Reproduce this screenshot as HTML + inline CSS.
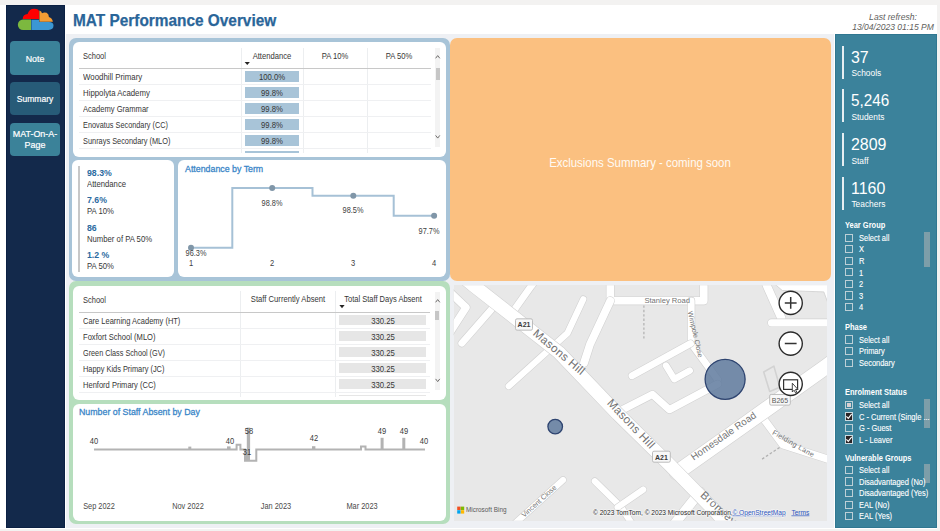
<!DOCTYPE html>
<html><head><meta charset="utf-8"><style>
html,body{margin:0;padding:0;width:940px;height:531px;overflow:hidden;background:#f3f2f1;}
body{position:relative;font-family:"Liberation Sans", sans-serif;}
.r{position:absolute;box-sizing:content-box;}
.t{position:absolute;line-height:1;white-space:nowrap;}
svg{position:absolute;left:0;top:0;}
</style></head><body>
<div class="r" style="left:0px;top:0px;width:940px;height:531px;background:#f3f2f1;border-radius:0px;"></div>
<div class="r" style="left:0px;top:4.5px;width:937px;height:524px;background:#ffffff;border-radius:0px;"></div>
<div class="r" style="left:6px;top:5px;width:58.6px;height:523px;background:#13294b;border-radius:0px;box-shadow:inset 0 0 0 1px #0b2043;"></div>
<div class="r" style="left:66px;top:34px;width:767.8px;height:494px;background:#eef0f4;border-radius:0px;"></div>
<div class="r" style="left:835.3px;top:34px;width:101.7px;height:494px;background:#3b829b;border-radius:0px;box-shadow:inset 0 0 0 1px #307791;"></div>
<div class="t" style="left:73.40px;top:12.10px;font-size:16.3px;color:#2a6599;font-weight:bold;font-style:normal;transform:scaleX(0.945);transform-origin:left;-webkit-text-stroke:0.25px #2a6599;">MAT Performance Overview</div>
<div class="t" style="left:593.00px;width:600px;text-align:center;top:12.62px;font-size:8.6px;color:#605e5c;font-weight:normal;font-style:italic;">Last refresh:</div>
<div class="t" style="left:593.00px;width:600px;text-align:center;top:23.16px;font-size:8.55px;color:#605e5c;font-weight:normal;font-style:italic;">13/04/2023 01:15 PM</div>
<div class="r" style="left:10px;top:41px;width:50.2px;height:33.5px;background:#3b8299;border-radius:4px;"></div>
<div class="t" style="left:-264.90px;width:600px;text-align:center;top:55.03px;font-size:9.3px;color:#ffffff;font-weight:normal;font-style:normal;transform:scaleX(0.95);transform-origin:center;-webkit-text-stroke:0.2px #ffffff;">Note</div>
<div class="r" style="left:10px;top:82px;width:50.2px;height:33px;background:#275b78;border-radius:4px;"></div>
<div class="t" style="left:-264.90px;width:600px;text-align:center;top:95.13px;font-size:9.3px;color:#ffffff;font-weight:normal;font-style:normal;transform:scaleX(0.92);transform-origin:center;-webkit-text-stroke:0.2px #ffffff;">Summary</div>
<div class="r" style="left:10px;top:122.5px;width:50.2px;height:33px;background:#3b8299;border-radius:4px;"></div>
<div class="t" style="left:-264.90px;width:600px;text-align:center;top:129.83px;font-size:9.3px;color:#ffffff;font-weight:normal;font-style:normal;transform:scaleX(0.96);transform-origin:center;-webkit-text-stroke:0.2px #ffffff;">MAT-On-A-</div>
<div class="t" style="left:-264.90px;width:600px;text-align:center;top:141.13px;font-size:9.3px;color:#ffffff;font-weight:normal;font-style:normal;transform:scaleX(0.96);transform-origin:center;-webkit-text-stroke:0.2px #ffffff;">Page</div>
<div class="r" style="left:68.5px;top:38px;width:381px;height:243px;background:#a8c4d8;border-radius:7px;"></div>
<div class="r" style="left:72.5px;top:42px;width:373.5px;height:115px;background:#ffffff;border-radius:6px;"></div>
<div class="r" style="left:72.3px;top:160px;width:102px;height:117.2px;background:#ffffff;border-radius:6px;"></div>
<div class="r" style="left:178px;top:160px;width:268px;height:117.2px;background:#ffffff;border-radius:6px;"></div>
<div class="t" style="left:82.70px;top:51.92px;font-size:8.6px;color:#363636;font-weight:normal;font-style:normal;transform:scaleX(0.87);transform-origin:left;">School</div>
<div class="t" style="left:-28.20px;width:600px;text-align:center;top:51.92px;font-size:8.6px;color:#363636;font-weight:normal;font-style:normal;transform:scaleX(0.89);transform-origin:center;">Attendance</div>
<div class="t" style="left:35.20px;width:600px;text-align:center;top:51.92px;font-size:8.6px;color:#363636;font-weight:normal;font-style:normal;transform:scaleX(0.89);transform-origin:center;">PA 10%</div>
<div class="t" style="left:98.80px;width:600px;text-align:center;top:51.92px;font-size:8.6px;color:#363636;font-weight:normal;font-style:normal;transform:scaleX(0.89);transform-origin:center;">PA 50%</div>
<div class="r" style="left:240.6px;top:48px;width:0.8px;height:105px;background:#eceef0;border-radius:0px;"></div>
<div class="r" style="left:303.4px;top:48px;width:0.8px;height:105px;background:#eceef0;border-radius:0px;"></div>
<div class="r" style="left:366.7px;top:48px;width:0.8px;height:105px;background:#eceef0;border-radius:0px;"></div>
<div class="r" style="left:79px;top:68.2px;width:351.5px;height:1.2px;background:#c8c8c8;border-radius:0px;"></div>
<div class="r" style="left:244.5px;top:71.4px;width:54.60000000000002px;height:10.6px;background:#a8c4d8;border-radius:0px;"></div>
<div class="t" style="left:82.50px;top:73.22px;font-size:8.6px;color:#363636;font-weight:normal;font-style:normal;transform:scaleX(0.915);transform-origin:left;">Woodhill Primary</div>
<div class="t" style="left:-28.20px;width:600px;text-align:center;top:73.22px;font-size:8.6px;color:#363636;font-weight:normal;font-style:normal;transform:scaleX(0.9);transform-origin:center;">100.0%</div>
<div class="r" style="left:79px;top:84.0px;width:351.5px;height:0.8px;background:#eff0f2;border-radius:0px;"></div>
<div class="r" style="left:244.5px;top:87.30000000000001px;width:54.10000000000002px;height:10.6px;background:#a8c4d8;border-radius:0px;"></div>
<div class="t" style="left:82.50px;top:89.12px;font-size:8.6px;color:#363636;font-weight:normal;font-style:normal;transform:scaleX(0.909);transform-origin:left;">Hippolyta Academy</div>
<div class="t" style="left:-28.20px;width:600px;text-align:center;top:89.12px;font-size:8.6px;color:#363636;font-weight:normal;font-style:normal;transform:scaleX(0.9);transform-origin:center;">99.8%</div>
<div class="r" style="left:79px;top:99.9px;width:351.5px;height:0.8px;background:#eff0f2;border-radius:0px;"></div>
<div class="r" style="left:244.5px;top:103.2px;width:54.10000000000002px;height:10.6px;background:#a8c4d8;border-radius:0px;"></div>
<div class="t" style="left:82.50px;top:105.02px;font-size:8.6px;color:#363636;font-weight:normal;font-style:normal;transform:scaleX(0.881);transform-origin:left;">Academy Grammar</div>
<div class="t" style="left:-28.20px;width:600px;text-align:center;top:105.02px;font-size:8.6px;color:#363636;font-weight:normal;font-style:normal;transform:scaleX(0.9);transform-origin:center;">99.8%</div>
<div class="r" style="left:79px;top:115.8px;width:351.5px;height:0.8px;background:#eff0f2;border-radius:0px;"></div>
<div class="r" style="left:244.5px;top:119.10000000000001px;width:54.10000000000002px;height:10.6px;background:#a8c4d8;border-radius:0px;"></div>
<div class="t" style="left:82.50px;top:120.92px;font-size:8.6px;color:#363636;font-weight:normal;font-style:normal;transform:scaleX(0.851);transform-origin:left;">Enovatus Secondary (CC)</div>
<div class="t" style="left:-28.20px;width:600px;text-align:center;top:120.92px;font-size:8.6px;color:#363636;font-weight:normal;font-style:normal;transform:scaleX(0.9);transform-origin:center;">99.8%</div>
<div class="r" style="left:79px;top:131.7px;width:351.5px;height:0.8px;background:#eff0f2;border-radius:0px;"></div>
<div class="r" style="left:244.5px;top:135.0px;width:54.10000000000002px;height:10.6px;background:#a8c4d8;border-radius:0px;"></div>
<div class="t" style="left:82.50px;top:136.82px;font-size:8.6px;color:#363636;font-weight:normal;font-style:normal;transform:scaleX(0.859);transform-origin:left;">Sunrays Secondary (MLO)</div>
<div class="t" style="left:-28.20px;width:600px;text-align:center;top:136.82px;font-size:8.6px;color:#363636;font-weight:normal;font-style:normal;transform:scaleX(0.9);transform-origin:center;">99.8%</div>
<div class="r" style="left:79px;top:147.6px;width:351.5px;height:0.8px;background:#eff0f2;border-radius:0px;"></div>
<div class="r" style="left:244.5px;top:151.4px;width:54.1px;height:1.5px;background:#a8c4d8;border-radius:0px;"></div>
<div class="r" style="left:434.5px;top:48px;width:5.8px;height:98.6px;background:#f3f3f3;border-radius:0px;"></div>
<div class="r" style="left:435.5px;top:67.7px;width:4px;height:12px;background:#c6c6c6;border-radius:0px;"></div>
<div class="r" style="left:78.4px;top:165.6px;width:1.6px;height:106.4px;background:#c8c8c8;border-radius:0px;"></div>
<div class="t" style="left:87.00px;top:167.77px;font-size:9.6px;color:#2b6aa0;font-weight:bold;font-style:normal;transform:scaleX(0.91);transform-origin:left;">98.3%</div>
<div class="t" style="left:87.10px;top:179.67px;font-size:8.3px;color:#363636;font-weight:normal;font-style:normal;transform:scaleX(0.93);transform-origin:left;">Attendance</div>
<div class="t" style="left:87.00px;top:195.37px;font-size:9.6px;color:#2b6aa0;font-weight:bold;font-style:normal;transform:scaleX(0.91);transform-origin:left;">7.6%</div>
<div class="t" style="left:87.10px;top:206.87px;font-size:8.3px;color:#363636;font-weight:normal;font-style:normal;transform:scaleX(0.93);transform-origin:left;">PA 10%</div>
<div class="t" style="left:87.00px;top:222.57px;font-size:9.6px;color:#2b6aa0;font-weight:bold;font-style:normal;transform:scaleX(0.91);transform-origin:left;">86</div>
<div class="t" style="left:87.10px;top:234.77px;font-size:8.3px;color:#363636;font-weight:normal;font-style:normal;transform:scaleX(0.93);transform-origin:left;">Number of PA 50%</div>
<div class="t" style="left:87.00px;top:250.07px;font-size:9.6px;color:#2b6aa0;font-weight:bold;font-style:normal;transform:scaleX(0.91);transform-origin:left;">1.2 %</div>
<div class="t" style="left:87.10px;top:262.27px;font-size:8.3px;color:#363636;font-weight:normal;font-style:normal;transform:scaleX(0.93);transform-origin:left;">PA 50%</div>
<div class="t" style="left:184.50px;top:164.24px;font-size:9.4px;color:#3a86c8;font-weight:normal;font-style:normal;transform:scaleX(0.94);transform-origin:left;-webkit-text-stroke:0.3px #3a86c8;">Attendance by Term</div>
<div class="t" style="left:-27.80px;width:600px;text-align:center;top:198.69px;font-size:8.4px;color:#404040;font-weight:normal;font-style:normal;transform:scaleX(0.88);transform-origin:center;">98.8%</div>
<div class="t" style="left:53.30px;width:600px;text-align:center;top:206.39px;font-size:8.4px;color:#404040;font-weight:normal;font-style:normal;transform:scaleX(0.88);transform-origin:center;">98.5%</div>
<div class="t" style="left:128.60px;width:600px;text-align:center;top:226.99px;font-size:8.4px;color:#404040;font-weight:normal;font-style:normal;transform:scaleX(0.88);transform-origin:center;">97.7%</div>
<div class="t" style="left:-109.00px;width:600px;text-align:center;top:259.19px;font-size:8.4px;color:#404040;font-weight:normal;font-style:normal;transform:scaleX(0.9);transform-origin:center;">1</div>
<div class="t" style="left:-27.80px;width:600px;text-align:center;top:259.19px;font-size:8.4px;color:#404040;font-weight:normal;font-style:normal;transform:scaleX(0.9);transform-origin:center;">2</div>
<div class="t" style="left:53.30px;width:600px;text-align:center;top:259.19px;font-size:8.4px;color:#404040;font-weight:normal;font-style:normal;transform:scaleX(0.9);transform-origin:center;">3</div>
<div class="t" style="left:134.10px;width:600px;text-align:center;top:259.19px;font-size:8.4px;color:#404040;font-weight:normal;font-style:normal;transform:scaleX(0.9);transform-origin:center;">4</div>
<div class="r" style="left:68.5px;top:281.2px;width:381.6px;height:242.6px;background:#b6debd;border-radius:7px;"></div>
<div class="r" style="left:72.5px;top:285.5px;width:373.3px;height:114.8px;background:#ffffff;border-radius:6px;"></div>
<div class="r" style="left:72.5px;top:404px;width:373.3px;height:116.8px;background:#ffffff;border-radius:6px;"></div>
<div class="t" style="left:82.70px;top:295.52px;font-size:8.6px;color:#363636;font-weight:normal;font-style:normal;transform:scaleX(0.87);transform-origin:left;">School</div>
<div class="t" style="left:-12.40px;width:600px;text-align:center;top:295.32px;font-size:8.6px;color:#363636;font-weight:normal;font-style:normal;transform:scaleX(0.89);transform-origin:center;">Staff Currently Absent</div>
<div class="t" style="left:83.10px;width:600px;text-align:center;top:295.32px;font-size:8.6px;color:#363636;font-weight:normal;font-style:normal;transform:scaleX(0.875);transform-origin:center;">Total Staff Days Absent</div>
<div class="r" style="left:240.3px;top:291px;width:0.8px;height:106px;background:#eceef0;border-radius:0px;"></div>
<div class="r" style="left:334.8px;top:291px;width:0.8px;height:106px;background:#eceef0;border-radius:0px;"></div>
<div class="r" style="left:79px;top:311.8px;width:351.3px;height:1.2px;background:#c8c8c8;border-radius:0px;"></div>
<div class="r" style="left:339px;top:315px;width:87.4px;height:10.3px;background:#e6e6e6;border-radius:0px;"></div>
<div class="t" style="left:82.50px;top:316.72px;font-size:8.6px;color:#363636;font-weight:normal;font-style:normal;transform:scaleX(0.871);transform-origin:left;">Care Learning Academy (HT)</div>
<div class="t" style="left:82.70px;width:600px;text-align:center;top:316.72px;font-size:8.6px;color:#363636;font-weight:normal;font-style:normal;transform:scaleX(0.9);transform-origin:center;">330.25</div>
<div class="r" style="left:79px;top:328px;width:351.3px;height:0.8px;background:#eff0f2;border-radius:0px;"></div>
<div class="r" style="left:339px;top:331px;width:87.4px;height:10.3px;background:#e6e6e6;border-radius:0px;"></div>
<div class="t" style="left:82.50px;top:332.72px;font-size:8.6px;color:#363636;font-weight:normal;font-style:normal;transform:scaleX(0.883);transform-origin:left;">Foxfort School (MLO)</div>
<div class="t" style="left:82.70px;width:600px;text-align:center;top:332.72px;font-size:8.6px;color:#363636;font-weight:normal;font-style:normal;transform:scaleX(0.9);transform-origin:center;">330.25</div>
<div class="r" style="left:79px;top:344px;width:351.3px;height:0.8px;background:#eff0f2;border-radius:0px;"></div>
<div class="r" style="left:339px;top:347px;width:87.4px;height:10.3px;background:#e6e6e6;border-radius:0px;"></div>
<div class="t" style="left:82.50px;top:348.72px;font-size:8.6px;color:#363636;font-weight:normal;font-style:normal;transform:scaleX(0.845);transform-origin:left;">Green Class School (GV)</div>
<div class="t" style="left:82.70px;width:600px;text-align:center;top:348.72px;font-size:8.6px;color:#363636;font-weight:normal;font-style:normal;transform:scaleX(0.9);transform-origin:center;">330.25</div>
<div class="r" style="left:79px;top:360px;width:351.3px;height:0.8px;background:#eff0f2;border-radius:0px;"></div>
<div class="r" style="left:339px;top:363px;width:87.4px;height:10.3px;background:#e6e6e6;border-radius:0px;"></div>
<div class="t" style="left:82.50px;top:364.72px;font-size:8.6px;color:#363636;font-weight:normal;font-style:normal;transform:scaleX(0.861);transform-origin:left;">Happy Kids Primary (JC)</div>
<div class="t" style="left:82.70px;width:600px;text-align:center;top:364.72px;font-size:8.6px;color:#363636;font-weight:normal;font-style:normal;transform:scaleX(0.9);transform-origin:center;">330.25</div>
<div class="r" style="left:79px;top:376px;width:351.3px;height:0.8px;background:#eff0f2;border-radius:0px;"></div>
<div class="r" style="left:339px;top:379px;width:87.4px;height:10.3px;background:#e6e6e6;border-radius:0px;"></div>
<div class="t" style="left:82.50px;top:380.72px;font-size:8.6px;color:#363636;font-weight:normal;font-style:normal;transform:scaleX(0.877);transform-origin:left;">Henford Primary (CC)</div>
<div class="t" style="left:82.70px;width:600px;text-align:center;top:380.72px;font-size:8.6px;color:#363636;font-weight:normal;font-style:normal;transform:scaleX(0.9);transform-origin:center;">330.25</div>
<div class="r" style="left:79px;top:392px;width:351.3px;height:0.8px;background:#eff0f2;border-radius:0px;"></div>
<div class="r" style="left:339px;top:394.6px;width:87.4px;height:1.2px;background:#e6e6e6;border-radius:0px;"></div>
<div class="r" style="left:434.5px;top:291.5px;width:5.6px;height:98px;background:#f3f3f3;border-radius:0px;"></div>
<div class="r" style="left:435.3px;top:310.6px;width:4px;height:9.1px;background:#c6c6c6;border-radius:0px;"></div>
<div class="t" style="left:78.90px;top:407.04px;font-size:9.4px;color:#3a86c8;font-weight:normal;font-style:normal;transform:scaleX(0.94);transform-origin:left;-webkit-text-stroke:0.3px #3a86c8;">Number of Staff Absent by Day</div>
<div class="t" style="left:-200.90px;width:600px;text-align:center;top:502.42px;font-size:8.6px;color:#4a4a4a;font-weight:normal;font-style:normal;transform:scaleX(0.86);transform-origin:center;">Sep 2022</div>
<div class="t" style="left:-112.30px;width:600px;text-align:center;top:502.42px;font-size:8.6px;color:#4a4a4a;font-weight:normal;font-style:normal;transform:scaleX(0.86);transform-origin:center;">Nov 2022</div>
<div class="t" style="left:-23.80px;width:600px;text-align:center;top:502.42px;font-size:8.6px;color:#4a4a4a;font-weight:normal;font-style:normal;transform:scaleX(0.86);transform-origin:center;">Jan 2023</div>
<div class="t" style="left:62.10px;width:600px;text-align:center;top:502.42px;font-size:8.6px;color:#4a4a4a;font-weight:normal;font-style:normal;transform:scaleX(0.86);transform-origin:center;">Mar 2023</div>
<div class="r" style="left:449.7px;top:38px;width:381.3px;height:243px;background:#fbc080;border-radius:7px;"></div>
<div class="t" style="left:340.00px;width:600px;text-align:center;top:156.96px;font-size:12.1px;color:#fffaf3;font-weight:normal;font-style:normal;transform:scaleX(0.945);transform-origin:center;">Exclusions Summary - coming soon</div>
<div class="r" style="left:453.6px;top:285.2px;width:373.4px;height:235.6px;background:#e8e8e8;border-radius:0px;"></div>
<div class="r" style="left:842.4px;top:45.6px;width:1.5px;height:33.2px;background:#e6eef2;border-radius:0px;"></div>
<div class="t" style="left:851.30px;top:49.55px;font-size:16.6px;color:#ffffff;font-weight:normal;font-style:normal;transform:scaleX(0.96);transform-origin:left;">37</div>
<div class="t" style="left:851.40px;top:69.39px;font-size:8.4px;color:#ffffff;font-weight:normal;font-style:normal;">Schools</div>
<div class="r" style="left:842.4px;top:89.3px;width:1.5px;height:33.2px;background:#e6eef2;border-radius:0px;"></div>
<div class="t" style="left:851.30px;top:93.25px;font-size:16.6px;color:#ffffff;font-weight:normal;font-style:normal;transform:scaleX(0.92);transform-origin:left;">5,246</div>
<div class="t" style="left:851.40px;top:113.09px;font-size:8.4px;color:#ffffff;font-weight:normal;font-style:normal;">Students</div>
<div class="r" style="left:842.4px;top:133.0px;width:1.5px;height:33.2px;background:#e6eef2;border-radius:0px;"></div>
<div class="t" style="left:851.30px;top:136.95px;font-size:16.6px;color:#ffffff;font-weight:normal;font-style:normal;transform:scaleX(0.96);transform-origin:left;">2809</div>
<div class="t" style="left:851.40px;top:156.79px;font-size:8.4px;color:#ffffff;font-weight:normal;font-style:normal;">Staff</div>
<div class="r" style="left:842.4px;top:176.70000000000002px;width:1.5px;height:33.2px;background:#e6eef2;border-radius:0px;"></div>
<div class="t" style="left:851.30px;top:180.65px;font-size:16.6px;color:#ffffff;font-weight:normal;font-style:normal;transform:scaleX(0.96);transform-origin:left;">1160</div>
<div class="t" style="left:851.40px;top:200.49px;font-size:8.4px;color:#ffffff;font-weight:normal;font-style:normal;">Teachers</div>
<div class="t" style="left:845.20px;top:220.97px;font-size:8.3px;color:#ffffff;font-weight:bold;font-style:normal;transform:scaleX(0.9);transform-origin:left;">Year Group</div>
<div class="r" style="left:845px;top:233.50px;width:6.2px;height:6.2px;border:0.8px solid #bccfd6;"></div>
<div class="r" style="left:845px;top:245.08px;width:6.2px;height:6.2px;border:0.8px solid #bccfd6;"></div>
<div class="r" style="left:845px;top:256.66px;width:6.2px;height:6.2px;border:0.8px solid #bccfd6;"></div>
<div class="r" style="left:845px;top:268.24px;width:6.2px;height:6.2px;border:0.8px solid #bccfd6;"></div>
<div class="r" style="left:845px;top:279.82px;width:6.2px;height:6.2px;border:0.8px solid #bccfd6;"></div>
<div class="r" style="left:845px;top:291.40px;width:6.2px;height:6.2px;border:0.8px solid #bccfd6;"></div>
<div class="r" style="left:845px;top:302.98px;width:6.2px;height:6.2px;border:0.8px solid #bccfd6;"></div>
<div class="r" style="left:924.4px;top:231.8px;width:5.4px;height:35.2px;background:#7d9ea9;border-radius:0px;"></div>
<div class="t" style="left:845.20px;top:322.97px;font-size:8.3px;color:#ffffff;font-weight:bold;font-style:normal;transform:scaleX(0.9);transform-origin:left;">Phase</div>
<div class="r" style="left:845px;top:335.40px;width:6.2px;height:6.2px;border:0.8px solid #bccfd6;"></div>
<div class="r" style="left:845px;top:347.10px;width:6.2px;height:6.2px;border:0.8px solid #bccfd6;"></div>
<div class="r" style="left:845px;top:358.80px;width:6.2px;height:6.2px;border:0.8px solid #bccfd6;"></div>
<div class="t" style="left:845.20px;top:388.47px;font-size:8.3px;color:#ffffff;font-weight:bold;font-style:normal;transform:scaleX(0.9);transform-origin:left;">Enrolment Status</div>
<div class="r" style="left:845px;top:400.80px;width:6.2px;height:6.2px;border:0.8px solid #bccfd6;"></div>
<div class="r" style="left:847.1px;top:402.90px;width:3.8px;height:3.8px;background:#d9cfd2;"></div>
<div class="r" style="left:845px;top:412.30px;width:6.4px;height:6.4px;background:#2a2224;border:0.8px solid #c9d8de;"></div>
<div class="r" style="left:845px;top:423.80px;width:6.2px;height:6.2px;border:0.8px solid #bccfd6;"></div>
<div class="r" style="left:845px;top:435.30px;width:6.4px;height:6.4px;background:#2a2224;border:0.8px solid #c9d8de;"></div>
<div class="r" style="left:924.2px;top:399.1px;width:5.8px;height:29.4px;background:#7d9ea9;border-radius:0px;"></div>
<div class="t" style="left:845.20px;top:453.77px;font-size:8.3px;color:#ffffff;font-weight:bold;font-style:normal;transform:scaleX(0.9);transform-origin:left;">Vulnerable Groups</div>
<div class="r" style="left:845px;top:465.90px;width:6.2px;height:6.2px;border:0.8px solid #bccfd6;"></div>
<div class="r" style="left:845px;top:477.45px;width:6.2px;height:6.2px;border:0.8px solid #bccfd6;"></div>
<div class="r" style="left:845px;top:489.00px;width:6.2px;height:6.2px;border:0.8px solid #bccfd6;"></div>
<div class="r" style="left:845px;top:500.55px;width:6.2px;height:6.2px;border:0.8px solid #bccfd6;"></div>
<div class="r" style="left:845px;top:512.10px;width:6.2px;height:6.2px;border:0.8px solid #bccfd6;"></div>
<div class="r" style="left:924.2px;top:464px;width:5.8px;height:18.7px;background:#7d9ea9;border-radius:0px;"></div>
<svg width="940" height="531" viewBox="0 0 940 531">
<path d="M31,19.6 H23 A5.15,5.15 0 0 0 23,29.9 H31 Z" fill="#7cb83f"/>
<path d="M31.4,19.7 H39.2 V22 H49 Q53.5,22 53.5,25.6 Q53.5,29.9 48.5,29.9 H31.4 Z" fill="#3b97d3"/>
<path d="M22.7,19.1 Q22.7,14.3 27.6,14 Q29.2,8.8 34.2,8.8 Q39.1,8.8 39.1,12 V19.1 Z" fill="#ff0000"/>
<path d="M39.4,10.6 Q41.6,11.4 42,13.2 Q44.2,11.8 46.6,12.8 Q49,14 48.9,17 Q52.4,18.3 52.9,21.8 H39.4 Z" fill="#f39c34"/>
<path d="M244.6,62 L249.9,62 L247.25,65.1 Z" fill="#252423"/>
<path d="M435.6,58.3 L437.7,55.6 L439.8,58.3 M435.6,135.4 L437.7,138.1 L439.8,135.4" fill="none" stroke="#605e5c" stroke-width="0.9"/>
<polyline points="191,247.8 232.3,247.8 232.3,188 312.5,188 312.5,195.7 393.7,195.7 393.7,215.7 434.1,215.7" fill="none" stroke="#a6c1d6" stroke-width="2"/>
<circle cx="191" cy="247.8" r="3" fill="#8096a8"/>
<circle cx="272.2" cy="188" r="3" fill="#8096a8"/>
<circle cx="353.3" cy="195.7" r="3" fill="#8096a8"/>
<circle cx="434.1" cy="215.7" r="3" fill="#8096a8"/>
<path d="M339.4,305 L344.6,305 L342,308.2 Z" fill="#252423"/>
<path d="M435.6,302.3 L437.7,299.6 L439.8,302.3 M435.6,378.9 L437.7,381.6 L439.8,378.9" fill="none" stroke="#605e5c" stroke-width="0.9"/>
<rect x="188.3" y="446.6" width="3" height="3" fill="#b3b3b3"/><rect x="227" y="446.4" width="3.6" height="3" fill="#b3b3b3"/><rect x="312" y="446.2" width="3.4" height="3.2" fill="#b3b3b3"/>
<polyline points="94,449.4 236.6,449.4 236.6,444.7 240.4,444.7 240.4,449.4 245,449.4 245,460.8 256.3,460.8 256.3,449.4 361,449.4 361,446.5 365.5,446.5 365.5,449.4 425,449.4" fill="none" stroke="#b3b3b3" stroke-width="2"/>
<rect x="246.8" y="427.6" width="3.3" height="22" fill="#b3b3b3"/>
<rect x="245" y="449" width="5" height="12" fill="#b3b3b3"/>
<rect x="380.6" y="437.8" width="3" height="12" fill="#b3b3b3"/>
<rect x="402.3" y="437.8" width="3" height="12" fill="#b3b3b3"/>
<defs><clipPath id="mapclip"><rect x="453.6" y="285.2" width="373.4" height="235.6"/></clipPath></defs><g clip-path="url(#mapclip)"><polyline points="445,287.5 466,307.5 447,337" fill="none" stroke="#d2d2d2" stroke-width="8.7" stroke-linejoin="round" stroke-linecap="round"/>
<polyline points="445,287.5 466,307.5 447,337" fill="none" stroke="#ffffff" stroke-width="7.5" stroke-linejoin="round" stroke-linecap="round"/>
<polyline points="545,268 531.2,286.1 512,313" fill="none" stroke="#d2d2d2" stroke-width="8.0" stroke-linejoin="round" stroke-linecap="round"/>
<polyline points="545,268 531.2,286.1 512,313" fill="none" stroke="#ffffff" stroke-width="6.8" stroke-linejoin="round" stroke-linecap="round"/>
<polyline points="497,303 461.8,343.2" fill="none" stroke="#d2d2d2" stroke-width="8.0" stroke-linejoin="round" stroke-linecap="round"/>
<polyline points="497,303 461.8,343.2" fill="none" stroke="#ffffff" stroke-width="6.8" stroke-linejoin="round" stroke-linecap="round"/>
<polyline points="583.3,299.2 567.5,333.1 508.7,386.2" fill="none" stroke="#d2d2d2" stroke-width="7.4" stroke-linejoin="round" stroke-linecap="round"/>
<polyline points="583.3,299.2 567.5,333.1 508.7,386.2" fill="none" stroke="#ffffff" stroke-width="6.2" stroke-linejoin="round" stroke-linecap="round"/>
<polyline points="610.3,270 610.3,300.8 703.8,300.8 703.8,270" fill="none" stroke="#d2d2d2" stroke-width="8.799999999999999" stroke-linejoin="round" stroke-linecap="round"/>
<polyline points="610.3,270 610.3,300.8 703.8,300.8 703.8,270" fill="none" stroke="#ffffff" stroke-width="7.6" stroke-linejoin="round" stroke-linecap="round"/>
<polyline points="610.3,300.8 590,344.4 584,363" fill="none" stroke="#d2d2d2" stroke-width="9.0" stroke-linejoin="round" stroke-linecap="round"/>
<polyline points="610.3,300.8 590,344.4 584,363" fill="none" stroke="#ffffff" stroke-width="7.8" stroke-linejoin="round" stroke-linecap="round"/>
<polyline points="691.2,300.8 691.2,343.6 717.6,379.6" fill="none" stroke="#d2d2d2" stroke-width="8.0" stroke-linejoin="round" stroke-linecap="round"/>
<polyline points="691.2,300.8 691.2,343.6 717.6,379.6" fill="none" stroke="#ffffff" stroke-width="6.8" stroke-linejoin="round" stroke-linecap="round"/>
<polyline points="632,375.8 690.5,343.6" fill="none" stroke="#d2d2d2" stroke-width="8.0" stroke-linejoin="round" stroke-linecap="round"/>
<polyline points="632,375.8 690.5,343.6" fill="none" stroke="#ffffff" stroke-width="6.8" stroke-linejoin="round" stroke-linecap="round"/>
<polyline points="666,365.6 674.4,379.2 689.7,370.7" fill="none" stroke="#d2d2d2" stroke-width="7.7" stroke-linejoin="round" stroke-linecap="round"/>
<polyline points="666,365.6 674.4,379.2 689.7,370.7" fill="none" stroke="#ffffff" stroke-width="6.5" stroke-linejoin="round" stroke-linecap="round"/>
<polyline points="618,412 652.4,394.4 669.3,409.7 717.6,384" fill="none" stroke="#d2d2d2" stroke-width="8.4" stroke-linejoin="round" stroke-linecap="round"/>
<polyline points="618,412 652.4,394.4 669.3,409.7 717.6,384" fill="none" stroke="#ffffff" stroke-width="7.2" stroke-linejoin="round" stroke-linecap="round"/>
<polyline points="764.5,280 767,286 781.3,318" fill="none" stroke="#d2d2d2" stroke-width="9.2" stroke-linejoin="round" stroke-linecap="round"/>
<polyline points="764.5,280 767,286 781.3,318" fill="none" stroke="#ffffff" stroke-width="8" stroke-linejoin="round" stroke-linecap="round"/>
<polyline points="771.5,322.8 840,322.8" fill="none" stroke="#d2d2d2" stroke-width="8.4" stroke-linejoin="round" stroke-linecap="round"/>
<polyline points="771.5,322.8 840,322.8" fill="none" stroke="#ffffff" stroke-width="7.2" stroke-linejoin="round" stroke-linecap="round"/>
<path d="M770,280 L782.3,290.5 L823.8,291.9 L829,306 L829,280 Z" fill="#ffffff" stroke="#d3d3d3" stroke-width="0.9"/>
<polyline points="760,414 782.8,444.8 840,463" fill="none" stroke="#d2d2d2" stroke-width="8.4" stroke-linejoin="round" stroke-linecap="round"/>
<polyline points="760,414 782.8,444.8 840,463" fill="none" stroke="#ffffff" stroke-width="7.2" stroke-linejoin="round" stroke-linecap="round"/>
<polyline points="563,480 500,537" fill="none" stroke="#d2d2d2" stroke-width="7.4" stroke-linejoin="round" stroke-linecap="round"/>
<polyline points="563,480 500,537" fill="none" stroke="#ffffff" stroke-width="6.2" stroke-linejoin="round" stroke-linecap="round"/>
<polyline points="594.8,481.2 621,507 636,530" fill="none" stroke="#d2d2d2" stroke-width="7.4" stroke-linejoin="round" stroke-linecap="round"/>
<polyline points="594.8,481.2 621,507 636,530" fill="none" stroke="#ffffff" stroke-width="6.2" stroke-linejoin="round" stroke-linecap="round"/>
<polyline points="643.2,489.6 617.6,507.2" fill="none" stroke="#d2d2d2" stroke-width="7.4" stroke-linejoin="round" stroke-linecap="round"/>
<polyline points="643.2,489.6 617.6,507.2" fill="none" stroke="#ffffff" stroke-width="6.2" stroke-linejoin="round" stroke-linecap="round"/>
<polyline points="700,492 668,532" fill="none" stroke="#d2d2d2" stroke-width="10.7" stroke-linejoin="round" stroke-linecap="round"/>
<polyline points="700,492 668,532" fill="none" stroke="#ffffff" stroke-width="9.5" stroke-linejoin="round" stroke-linecap="round"/>
<polyline points="677,472.5 730,435 827,366 860,342.5" fill="none" stroke="#d2d2d2" stroke-width="16.2" stroke-linejoin="round" stroke-linecap="round"/>
<polyline points="677,472.5 730,435 827,366 860,342.5" fill="none" stroke="#ffffff" stroke-width="15" stroke-linejoin="round" stroke-linecap="round"/>
<polyline points="440,258 473.7,285.6 559,352.5 617.7,413.9 669.5,464.7 716,512 745,545" fill="none" stroke="#d2d2d2" stroke-width="14.2" stroke-linejoin="round" stroke-linecap="round"/>
<polyline points="440,258 473.7,285.6 559,352.5 617.7,413.9 669.5,464.7 716,512 745,545" fill="none" stroke="#ffffff" stroke-width="13" stroke-linejoin="round" stroke-linecap="round"/>
<path d="M763.7,372 L773.9,366.1 L779.8,387.3 L769.7,391.5 Z" fill="none" stroke="#d2d2d2" stroke-width="1.6" stroke-linejoin="round"/>
<line x1="643.9" y1="305.4" x2="643.9" y2="339.3" stroke="#b0b0b0" stroke-width="1.2" stroke-dasharray="2.4,2"/>
<line x1="762.1" y1="459.1" x2="781.2" y2="446.4" stroke="#b0b0b0" stroke-width="1.3" stroke-dasharray="2.6,2"/>
<text x="559.5" y="351.6" transform="rotate(40 559.5 351.6)" font-family="Liberation Sans" font-size="11.6" fill="#737373" font-weight="normal" letter-spacing="0.35" text-anchor="middle" dominant-baseline="central">Masons Hill</text>
<text x="631.6" y="423.5" transform="rotate(46.5 631.6 423.5)" font-family="Liberation Sans" font-size="11.6" fill="#737373" font-weight="normal" letter-spacing="0.35" text-anchor="middle" dominant-baseline="central">Masons Hill</text>
<text x="723.4" y="435.9" transform="rotate(-34.8 723.4 435.9)" font-family="Liberation Sans" font-size="9.8" fill="#737373" font-weight="normal" letter-spacing="0.1" text-anchor="middle" dominant-baseline="central">Homesdale Road</text>
<text x="793.5" y="443.5" transform="rotate(30 793.5 443.5)" font-family="Liberation Sans" font-size="7.2" fill="#737373" font-weight="normal" letter-spacing="0.3" text-anchor="middle" dominant-baseline="central">Fielding Lane</text>
<text x="667.2" y="300.3" transform="rotate(0 667.2 300.3)" font-family="Liberation Sans" font-size="7.6" fill="#737373" font-weight="normal" letter-spacing="0" text-anchor="middle" dominant-baseline="central">Stanley Road</text>
<text x="695.5" y="334.2" transform="rotate(77 695.5 334.2)" font-family="Liberation Sans" font-size="7" fill="#737373" font-weight="normal" letter-spacing="0" text-anchor="middle" dominant-baseline="central">Wimpole Close</text>
<text x="538.9" y="501.2" transform="rotate(-42 538.9 501.2)" font-family="Liberation Sans" font-size="7.2" fill="#737373" font-weight="normal" letter-spacing="0" text-anchor="middle" dominant-baseline="central">Vincent Close</text>
<text x="719" y="508" transform="rotate(42 719 508)" font-family="Liberation Sans" font-size="11" fill="#737373" font-weight="normal" letter-spacing="0.6" text-anchor="middle" dominant-baseline="central">Bromley</text>
<rect x="515.5" y="318.85" width="17" height="11.3" rx="1.5" fill="#f8f8f8" stroke="#b5b5b5" stroke-width="0.9"/>
<text x="524" y="324.8" font-family="Liberation Sans" font-size="7" fill="#3a3a3a" font-weight="bold" text-anchor="middle" dominant-baseline="central">A21</text>
<rect x="652.5" y="451.2" width="17.8" height="11" rx="1.5" fill="#f8f8f8" stroke="#b5b5b5" stroke-width="0.9"/>
<text x="661.4" y="457.0" font-family="Liberation Sans" font-size="7" fill="#3a3a3a" font-weight="bold" text-anchor="middle" dominant-baseline="central">A21</text>
<rect x="769.7" y="394.45" width="20.6" height="10.7" rx="1.5" fill="#f8f8f8" stroke="#b5b5b5" stroke-width="0.9"/>
<text x="780" y="400.1" font-family="Liberation Sans" font-size="7" fill="#5a5a5a" font-weight="normal" text-anchor="middle" dominant-baseline="central">B265</text>
<circle cx="725.1" cy="379.3" r="20" fill="#5f7a9e" fill-opacity="0.85" stroke="#2e4470" stroke-width="1.3"/>
<circle cx="555.2" cy="426.6" r="7.3" fill="#5f7a9e" fill-opacity="0.85" stroke="#2e4470" stroke-width="1.3"/>
<circle cx="790.7" cy="302.9" r="11.6" fill="#ffffff" stroke="#2b2b2b" stroke-width="1.4"/>
<circle cx="790.7" cy="343.6" r="11.6" fill="#ffffff" stroke="#2b2b2b" stroke-width="1.4"/>
<circle cx="790.7" cy="383.9" r="11.6" fill="#ffffff" stroke="#2b2b2b" stroke-width="1.4"/>
<path d="M784.8,302.9 H796.6 M790.7,297 V308.8" stroke="#333" stroke-width="1.5"/>
<path d="M784.8,343.6 H796.6" stroke="#333" stroke-width="1.5"/>
<rect x="783.6" y="379.8" width="14" height="9.6" fill="none" stroke="#333" stroke-width="1.2"/>
<path d="M792.3,383.2 L792.3,392 L794.1,390.2 L795.8,393.3 L797.1,392.6 L795.5,389.6 L797.8,389.3 Z" fill="#fff" stroke="#333" stroke-width="0.9"/>
<rect x="457.2" y="506.6" width="3.4" height="3.4" fill="#f25022"/><rect x="460.8" y="506.6" width="3.4" height="3.4" fill="#7fba00"/><rect x="457.2" y="510.2" width="3.4" height="3.4" fill="#00a4ef"/><rect x="460.8" y="510.2" width="3.4" height="3.4" fill="#ffb900"/>
<text x="466" y="512.4" font-family="Liberation Sans" font-size="6.4" fill="#5a5a5a">Microsoft Bing</text>
<text x="593" y="514.5" font-family="Liberation Sans" font-size="6.6" fill="#2a2a2a" stroke="#f4f4f4" stroke-width="1.6" paint-order="stroke">&#169; 2023 TomTom, &#169; 2023 Microsoft Corporation,</text>
<text x="732.4" y="514.5" font-family="Liberation Sans" font-size="6.6" fill="#2b55c0" stroke="#f4f4f4" stroke-width="1.4" paint-order="stroke" text-decoration="underline">&#169; OpenStreetMap</text>
<text x="791.4" y="514.5" font-family="Liberation Sans" font-size="6.6" fill="#2b55c0" text-decoration="underline">Terms</text></g>
<path d="M846.4,416.30 L848.3,418.30 L851.7,413.90" fill="none" stroke="#ffffff" stroke-width="1.1"/>
<path d="M846.4,439.30 L848.3,441.30 L851.7,436.90" fill="none" stroke="#ffffff" stroke-width="1.1"/>
</svg>
<div class="t" style="left:-103.80px;width:600px;text-align:center;top:249.19px;font-size:8.4px;color:#404040;font-weight:normal;font-style:normal;transform:scaleX(0.88);transform-origin:center;">96.3%</div>
<div class="t" style="left:-206.00px;width:600px;text-align:center;top:437.19px;font-size:8.4px;color:#3b3b3b;font-weight:normal;font-style:normal;transform:scaleX(0.9);transform-origin:center;">40</div>
<div class="t" style="left:-70.50px;width:600px;text-align:center;top:436.69px;font-size:8.4px;color:#3b3b3b;font-weight:normal;font-style:normal;transform:scaleX(0.9);transform-origin:center;">40</div>
<div class="t" style="left:-51.40px;width:600px;text-align:center;top:427.29px;font-size:8.4px;color:#3b3b3b;font-weight:normal;font-style:normal;transform:scaleX(0.9);transform-origin:center;">58</div>
<div class="t" style="left:-53.40px;width:600px;text-align:center;top:447.69px;font-size:8.4px;color:#3b3b3b;font-weight:normal;font-style:normal;transform:scaleX(0.9);transform-origin:center;">31</div>
<div class="t" style="left:13.70px;width:600px;text-align:center;top:434.19px;font-size:8.4px;color:#3b3b3b;font-weight:normal;font-style:normal;transform:scaleX(0.9);transform-origin:center;">42</div>
<div class="t" style="left:82.00px;width:600px;text-align:center;top:427.29px;font-size:8.4px;color:#3b3b3b;font-weight:normal;font-style:normal;transform:scaleX(0.9);transform-origin:center;">49</div>
<div class="t" style="left:103.80px;width:600px;text-align:center;top:427.29px;font-size:8.4px;color:#3b3b3b;font-weight:normal;font-style:normal;transform:scaleX(0.9);transform-origin:center;">49</div>
<div class="t" style="left:124.20px;width:600px;text-align:center;top:436.69px;font-size:8.4px;color:#3b3b3b;font-weight:normal;font-style:normal;transform:scaleX(0.9);transform-origin:center;">40</div>
<div class="t" style="left:858.60px;top:233.82px;font-size:8.6px;color:#ffffff;font-weight:normal;font-style:normal;transform:scaleX(0.87);transform-origin:left;-webkit-text-stroke:0.12px #fff;">Select all</div>
<div class="t" style="left:858.60px;top:245.40px;font-size:8.6px;color:#ffffff;font-weight:normal;font-style:normal;transform:scaleX(0.87);transform-origin:left;-webkit-text-stroke:0.12px #fff;">X</div>
<div class="t" style="left:858.60px;top:256.98px;font-size:8.6px;color:#ffffff;font-weight:normal;font-style:normal;transform:scaleX(0.87);transform-origin:left;-webkit-text-stroke:0.12px #fff;">R</div>
<div class="t" style="left:858.60px;top:268.56px;font-size:8.6px;color:#ffffff;font-weight:normal;font-style:normal;transform:scaleX(0.87);transform-origin:left;-webkit-text-stroke:0.12px #fff;">1</div>
<div class="t" style="left:858.60px;top:280.14px;font-size:8.6px;color:#ffffff;font-weight:normal;font-style:normal;transform:scaleX(0.87);transform-origin:left;-webkit-text-stroke:0.12px #fff;">2</div>
<div class="t" style="left:858.60px;top:291.72px;font-size:8.6px;color:#ffffff;font-weight:normal;font-style:normal;transform:scaleX(0.87);transform-origin:left;-webkit-text-stroke:0.12px #fff;">3</div>
<div class="t" style="left:858.60px;top:303.30px;font-size:8.6px;color:#ffffff;font-weight:normal;font-style:normal;transform:scaleX(0.87);transform-origin:left;-webkit-text-stroke:0.12px #fff;">4</div>
<div class="t" style="left:858.60px;top:335.72px;font-size:8.6px;color:#ffffff;font-weight:normal;font-style:normal;transform:scaleX(0.87);transform-origin:left;-webkit-text-stroke:0.12px #fff;">Select all</div>
<div class="t" style="left:858.60px;top:347.42px;font-size:8.6px;color:#ffffff;font-weight:normal;font-style:normal;transform:scaleX(0.87);transform-origin:left;-webkit-text-stroke:0.12px #fff;">Primary</div>
<div class="t" style="left:858.60px;top:359.12px;font-size:8.6px;color:#ffffff;font-weight:normal;font-style:normal;transform:scaleX(0.87);transform-origin:left;-webkit-text-stroke:0.12px #fff;">Secondary</div>
<div class="t" style="left:858.60px;top:401.12px;font-size:8.6px;color:#ffffff;font-weight:normal;font-style:normal;transform:scaleX(0.87);transform-origin:left;-webkit-text-stroke:0.12px #fff;">Select all</div>
<div class="t" style="left:858.60px;top:412.62px;font-size:8.6px;color:#ffffff;font-weight:normal;font-style:normal;transform:scaleX(0.87);transform-origin:left;-webkit-text-stroke:0.12px #fff;">C - Current (Single ...</div>
<div class="t" style="left:858.60px;top:424.12px;font-size:8.6px;color:#ffffff;font-weight:normal;font-style:normal;transform:scaleX(0.87);transform-origin:left;-webkit-text-stroke:0.12px #fff;">G - Guest</div>
<div class="t" style="left:858.60px;top:435.62px;font-size:8.6px;color:#ffffff;font-weight:normal;font-style:normal;transform:scaleX(0.87);transform-origin:left;-webkit-text-stroke:0.12px #fff;">L - Leaver</div>
<div class="t" style="left:858.60px;top:466.22px;font-size:8.6px;color:#ffffff;font-weight:normal;font-style:normal;transform:scaleX(0.87);transform-origin:left;-webkit-text-stroke:0.12px #fff;">Select all</div>
<div class="t" style="left:858.60px;top:477.77px;font-size:8.6px;color:#ffffff;font-weight:normal;font-style:normal;transform:scaleX(0.87);transform-origin:left;-webkit-text-stroke:0.12px #fff;">Disadvantaged (No)</div>
<div class="t" style="left:858.60px;top:489.32px;font-size:8.6px;color:#ffffff;font-weight:normal;font-style:normal;transform:scaleX(0.87);transform-origin:left;-webkit-text-stroke:0.12px #fff;">Disadvantaged (Yes)</div>
<div class="t" style="left:858.60px;top:500.87px;font-size:8.6px;color:#ffffff;font-weight:normal;font-style:normal;transform:scaleX(0.87);transform-origin:left;-webkit-text-stroke:0.12px #fff;">EAL (No)</div>
<div class="t" style="left:858.60px;top:512.42px;font-size:8.6px;color:#ffffff;font-weight:normal;font-style:normal;transform:scaleX(0.87);transform-origin:left;-webkit-text-stroke:0.12px #fff;">EAL (Yes)</div>
</body></html>
